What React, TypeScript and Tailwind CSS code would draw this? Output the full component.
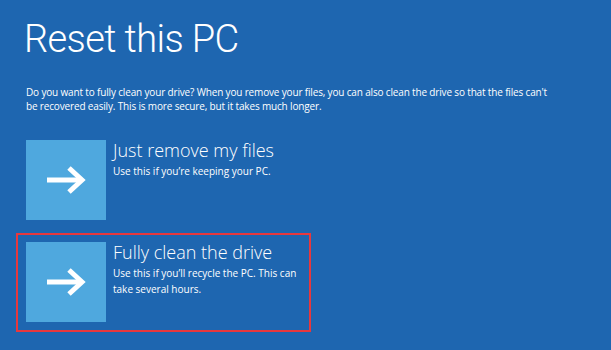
import React from 'react'

function ArrowTile() {
  return (
    <div className="w-[80px] h-[80px] shrink-0 bg-[#4fa8de] flex items-center justify-center">
      <svg width="40" height="30" viewBox="0 0 40 30" fill="none">
        <path d="M1 15 H35" stroke="white" strokeWidth="5" />
        <path d="M23 3 L36 15 L23 27" stroke="white" strokeWidth="5" strokeLinejoin="miter" />
      </svg>
    </div>
  )
}

function Option({ title, desc, selected }: { title: string; desc: string; selected?: boolean }) {
  return (
    <div
      className={
        'flex w-[295px] pt-[7px] pb-[8px] pl-[8px] gap-[7px] border-2 ' +
        (selected ? 'border-[#e8383d]' : 'border-transparent')
      }
    >
      <ArrowTile />
      <div className="flex flex-col">
        <div className="text-[18px] leading-[22px] font-light mt-[-1px]">{title}</div>
        <div className="text-[10px] leading-[16px] mt-[2px] w-[190px]">{desc}</div>
      </div>
    </div>
  )
}

export default function App() {
  return (
    <div
      className="w-[611px] h-[350px] bg-[#1e66b0] text-white overflow-hidden pl-[26px]"
      style={{ fontFamily: '"Open Sans", "Noto Sans", sans-serif' }}
    >
      <h1
        className="text-[38px] leading-[48px] font-light pt-[15px] ml-[-2px] tracking-[-0.6px]"
        style={{ fontFamily: 'Roboto, "Open Sans", sans-serif' }}
      >
        Reset this PC
      </h1>
      <p className="text-[10px] leading-[14px] mt-[22px] whitespace-nowrap tracking-[-0.16px]">
        Do you want to fully clean your drive? When you remove your files, you can also clean the drive so that the files
        can't
        <br />
        be recovered easily. This is more secure, but it takes much longer.
      </p>
      <div className="flex flex-col gap-[3px] mt-[18px] ml-[-10px]">
        <Option title="Just remove my files" desc="Use this if you’re keeping your PC." />
        <Option
          title="Fully clean the drive"
          desc="Use this if you’ll recycle the PC. This can take several hours."
          selected
        />
      </div>
    </div>
  )
}
